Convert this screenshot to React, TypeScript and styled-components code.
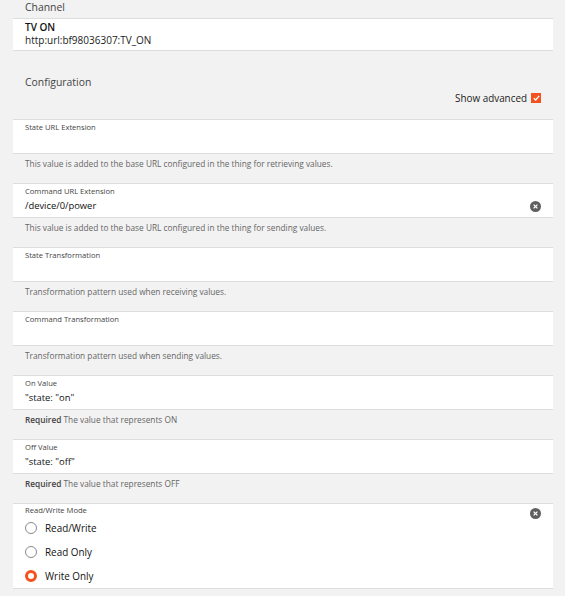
import { FC, ReactNode } from "react";
import styled, { createGlobalStyle } from "styled-components";

const GlobalStyle = createGlobalStyle`
  body {
    margin: 0;
    background: #f2f2f2;
    font-family: "Open Sans", "Noto Sans", sans-serif;
    color: #222;
  }
`;

const Page = styled.div`
  padding: 0 12px 0 13px;
  height: 596px;
  box-sizing: border-box;
`;

const SectionTitle = styled.div<{ $top?: number; $height?: number }>`
  margin-top: ${(p) => p.$top || 0}px;
  height: ${(p) => p.$height || 18}px;
  line-height: 14px;
  padding-left: 12px;
  font-size: 10.4px;
  color: #444;
`;

const ChannelCard = styled.div`
  background: #fff;
  border-top: 1px solid #ddd;
  border-bottom: 1px solid #ddd;
  padding: 2px 12px 3px;
  font-size: 10px;
  line-height: 13px;
`;

const ChannelName = styled.div`
  font-weight: 600;
  color: #111;
`;

const AdvancedRow = styled.div`
  display: flex;
  justify-content: flex-end;
  align-items: center;
  gap: 4px;
  height: 14px;
  margin: 0 12px 14px 0;
  font-size: 9.9px;
  color: #222;
`;

const CheckBox = styled.span`
  width: 10px;
  height: 10px;
  background: #f4511e;
  display: flex;
  align-items: center;
  justify-content: center;
`;

const FieldBox = styled.div<{ $tight?: boolean }>`
  position: relative;
  background: #fff;
  border-top: 1px solid #ddd;
  border-bottom: 1px solid #ddd;
  padding: ${(p) => (p.$tight ? "0 12px" : "1px 12px 2px")};
  min-height: 30px;
`;

const Label = styled.div`
  font-size: 7.6px;
  line-height: 12px;
  color: #444;
`;

const Value = styled.div`
  font-size: 9.4px;
  line-height: 18px;
  color: #111;
`;

const Help = styled.div`
  height: 29px;
  box-sizing: border-box;
  padding: 3px 12px 0;
  font-size: 8.3px;
  line-height: 14px;
  color: #666;

  b {
    font-weight: 600;
    color: #444;
  }
`;

const ClearButton = styled.span<{ $top: number }>`
  position: absolute;
  right: 12px;
  top: ${(p) => p.$top}px;
  width: 11px;
  height: 11px;
  border-radius: 50%;
  background: #5f5f5f;
  display: flex;
  align-items: center;
  justify-content: center;
`;

const RadioRow = styled.label`
  display: flex;
  align-items: center;
  height: 24px;
  font-size: 9.9px;
  color: #111;
`;

const RadioCircle = styled.span<{ $checked?: boolean }>`
  box-sizing: border-box;
  width: 12px;
  height: 12px;
  border-radius: 50%;
  margin-right: 8px;
  background: #fff;
  border: ${(p) => (p.$checked ? "3.5px solid #f4511e" : "1px solid #8a8a8a")};
`;

const ClearIcon: FC<{ top: number }> = ({ top }) => (
  <ClearButton $top={top}>
    <svg width="5" height="5" viewBox="0 0 5 5">
      <path d="M0.6 0.6 L4.4 4.4 M4.4 0.6 L0.6 4.4" stroke="#fff" strokeWidth="1.3" />
    </svg>
  </ClearButton>
);

type FieldProps = { label: string; value?: string; help: ReactNode; clear?: boolean };

const Field: FC<FieldProps> = ({ label, value, help, clear }) => (
  <>
    <FieldBox>
      <Label>{label}</Label>
      <Value>{value || "\u00a0"}</Value>
      {clear && <ClearIcon top={17} />}
    </FieldBox>
    <Help>{help}</Help>
  </>
);

const modes = ["Read/Write", "Read Only", "Write Only"];

const App: FC = () => (
  <Page>
    <GlobalStyle />
    <SectionTitle>Channel</SectionTitle>
    <ChannelCard>
      <ChannelName>TV ON</ChannelName>
      <div>http:url:bf98036307:TV_ON</div>
    </ChannelCard>
    <SectionTitle $top={24} $height={16}>Configuration</SectionTitle>
    <AdvancedRow>
      Show advanced
      <CheckBox>
        <svg width="7" height="6" viewBox="0 0 7 6">
          <path d="M0.8 3.2 L2.7 5 L6.2 0.8" stroke="#fff" strokeWidth="1.3" fill="none" />
        </svg>
      </CheckBox>
    </AdvancedRow>
    <Field
      label="State URL Extension"
      help="This value is added to the base URL configured in the thing for retrieving values."
    />
    <Field
      label="Command URL Extension"
      value="/device/0/power"
      clear
      help="This value is added to the base URL configured in the thing for sending values."
    />
    <Field label="State Transformation" help="Transformation pattern used when receiving values." />
    <Field label="Command Transformation" help="Transformation pattern used when sending values." />
    <Field
      label="On Value"
      value={'"state: "on"'}
      help={
        <>
          <b>Required</b> The value that represents ON
        </>
      }
    />
    <Field
      label="Off Value"
      value={'"state: "off"'}
      help={
        <>
          <b>Required</b> The value that represents OFF
        </>
      }
    />
    <FieldBox $tight>
      <Label>Read/Write Mode</Label>
      <ClearIcon top={4} />
      {modes.map((m) => (
        <RadioRow key={m}>
          <RadioCircle $checked={m === "Write Only"} />
          {m}
        </RadioRow>
      ))}
    </FieldBox>
  </Page>
);

export default App;
